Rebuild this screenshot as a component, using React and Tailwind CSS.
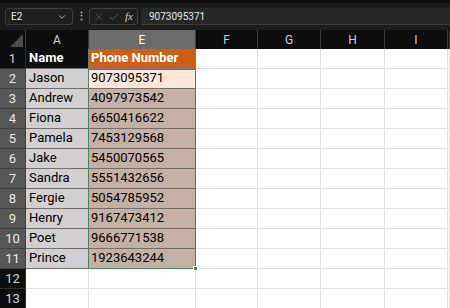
import { ChevronDown, X, Check } from "lucide-react";

const cols = ["A", "E", "F", "G", "H", "I", ""];
const widths = "grid-cols-[26px_63px_107px_62px_63px_64px_63px_1fr]";

const people = [
    ["Jason", "9073095371"],
    ["Andrew", "4097973542"],
    ["Fiona", "6650416622"],
    ["Pamela", "7453129568"],
    ["Jake", "5450070565"],
    ["Sandra", "5551432656"],
    ["Fergie", "5054785952"],
    ["Henry", "9167473412"],
    ["Poet", "9666771538"],
    ["Prince", "1923643244"],
];

function FormulaBar() {
    return (
        <div className="h-[30px] bg-[#1c1c1c] border-t-[3px] border-[#0e0e0e] relative">
            <div className="flex items-center gap-[3px] pt-[5px] pl-[5px] h-[22px]">
                <div className="w-[68px] h-[17px] rounded-[3px] border border-[#3e3e3e] bg-[#1f1f1f] flex items-center justify-between px-[5px] text-[10px] text-[#e6e6e6]">
                    <span>E2</span>
                    <ChevronDown size={10} strokeWidth={2} className="text-[#c8c8c8]" />
                </div>
                <span className="w-[10px] text-center text-[#bdbdbd] text-[11px] leading-none font-bold">⋮</span>
                <div className="w-[49px] h-[17px] rounded-[3px] border border-[#3e3e3e] bg-[#1f1f1f] flex items-center gap-[3px] px-[3px]">
                    <X size={12} strokeWidth={1.5} className="text-[#5e5e5e]" />
                    <Check size={12} strokeWidth={1.5} className="text-[#5e5e5e]" />
                    <span className="text-[11px] italic text-[#d0d0d0] ml-[2px]" style={{ fontFamily: '"Liberation Serif", serif' }}>fx</span>
                </div>
                <div className="flex-1 h-[17px] bg-[#272727] border-b border-[#3c3c3c] flex items-center pl-[8px] text-[10px] text-[#e6e6e6]">
                    9073095371
                </div>
            </div>
        </div>
    );
}

function Header() {
    return (
        <>
            <div className="h-[19px] bg-[#0d0d0d] border-r border-[#3a3a3a] relative">
                <div className="absolute right-[2px] bottom-[2px] w-0 h-0 border-l-[13px] border-l-transparent border-b-[13px] border-b-[#4a4a4a]" />
            </div>
            {cols.map((c, i) => (
                <div
                    key={i}
                    className={`h-[19px] flex items-center justify-center text-[12px] border-r border-[#3a3a3a] ${
                        c === "E" ? "bg-[#6b6b6b] text-white" : "bg-[#0d0d0d] text-[#cfcfcf]"
                    }`}
                >
                    {c}
                </div>
            ))}
        </>
    );
}

function Row({ n, name, phone }) {
    const selected = n >= 2 && n <= 11;
    const isData = n <= 11;
    let aCls = "bg-white border-[#e1e1e1]";
    let eCls = "bg-white border-[#e1e1e1]";
    if (n === 1) {
        aCls = "bg-[#0d0d0d] text-white font-bold border-[#7a7a7a]";
        eCls = "bg-[#c8601a] text-white font-bold border-[#7a7a7a]";
    } else if (isData) {
        aCls = "bg-[#d1cfcf] text-black border-[#6e6e6e]";
        eCls = n === 2 ? "bg-[#fde6d8] text-black border-[#6e6e6e]" : "bg-[#c5b0a6] text-black border-[#6e6e6e]";
    }
    const cell = "h-[20px] flex items-end pb-[2px] text-[13px] leading-[16px] border-r border-b";
    return (
        <>
            <div
                className={`h-[20px] flex items-center justify-center text-[13px] border-r border-b ${
                    selected ? "bg-[#575757] text-[#e8e8e8] border-[#3f3f3f]" : "bg-[#0d0d0d] text-[#d4d4d4] border-[#2e2e2e]"
                }`}
            >
                {n}
            </div>
            <div className={`${cell} pl-[3px] ${aCls}`}>{name}</div>
            <div className={`${cell} pl-[2px] ${eCls}`}>{phone}</div>
            {[0, 1, 2, 3, 4].map((i) => (
                <div key={i} className="h-[20px] bg-white border-r border-b border-[#e1e1e1]" />
            ))}
        </>
    );
}

export default function App() {
    const rows = [{ n: 1, name: "Name", phone: "Phone Number" }];
    people.forEach(([name, phone], i) => rows.push({ n: i + 2, name, phone }));
    rows.push({ n: 12, name: "", phone: "" }, { n: 13, name: "", phone: "" });

    return (
        <div className="w-[450px] h-[308px] overflow-hidden bg-white" style={{ fontFamily: "Roboto, sans-serif" }}>
            <FormulaBar />
            <div className={`grid ${widths} relative`}>
                <Header />
                {rows.map((r) => (
                    <Row key={r.n} {...r} />
                ))}
                {/* selection E2:E11 */}
                <div className="absolute left-[88px] top-[39px] w-[108px] h-[200px] border-[1.5px] border-[#4f7f60] pointer-events-none">
                    <div className="absolute -right-[3px] -bottom-[3px] w-[5px] h-[5px] bg-[#4f7f60] border border-white" />
                </div>
            </div>
        </div>
    );
}
